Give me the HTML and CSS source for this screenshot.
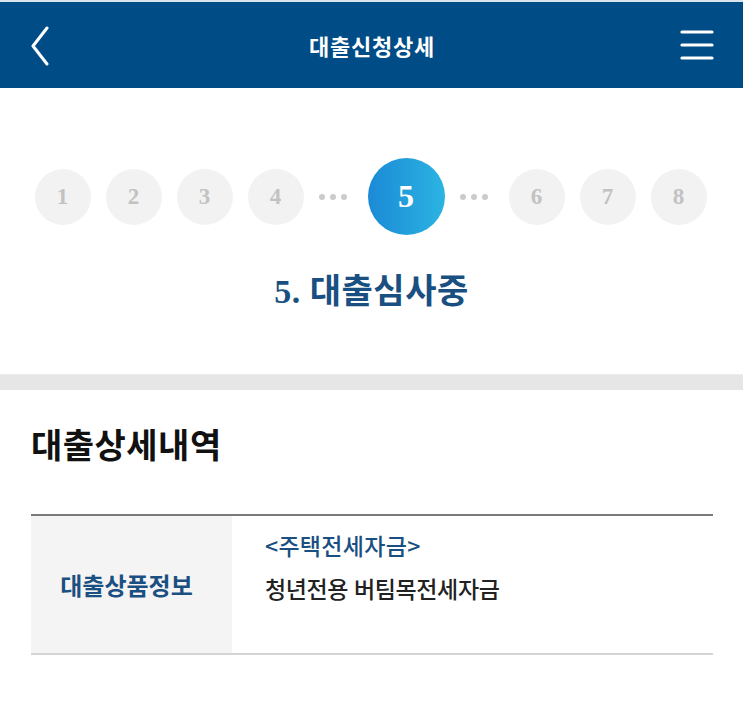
FILE: index.html
```html
<!DOCTYPE html>
<html lang="ko">
<head>
<meta charset="utf-8">
<link rel="stylesheet" href="styles.css">
</head>
<body>
<header class="topbar">
  <button class="icon-btn back" aria-label="뒤로">
    <svg width="20" height="40" viewBox="0 0 20 40"><path d="M17 2 L3 20 L17 38" fill="none" stroke="#fff" stroke-width="3" stroke-linecap="round" stroke-linejoin="round"/></svg>
  </button>
  <h1 class="topbar-title">대출신청상세</h1>
  <button class="icon-btn menu" aria-label="메뉴">
    <svg width="34" height="32" viewBox="0 0 34 32"><g stroke="#fff" stroke-width="3.2" stroke-linecap="round"><line x1="2" y1="3" x2="32" y2="3"/><line x1="2" y1="16" x2="32" y2="16"/><line x1="2" y1="29" x2="32" y2="29"/></g></svg>
  </button>
</header>

<section class="progress">
  <ol class="steps">
    <li class="step">1</li>
    <li class="step">2</li>
    <li class="step">3</li>
    <li class="step">4</li>
    <li class="ellipsis"><span></span><span></span><span></span></li>
    <li class="step current">5</li>
    <li class="ellipsis"><span></span><span></span><span></span></li>
    <li class="step">6</li>
    <li class="step">7</li>
    <li class="step">8</li>
  </ol>
  <h2 class="step-title">5. 대출심사중</h2>
</section>

<div class="divider"></div>

<section class="detail">
  <h3 class="detail-title">대출상세내역</h3>
  <div class="info-table">
    <div class="info-label">대출상품정보</div>
    <div class="info-value">
      <p class="category">&lt;주택전세자금&gt;</p>
      <p class="product">청년전용 버팀목전세자금</p>
    </div>
  </div>
</section>
</body>
</html>
```

FILE: styles.css
```css
* { box-sizing: border-box; }
html, body { margin: 0; padding: 0; background: #fff; }
body {
  font-family: "Noto Sans CJK KR", "Noto Sans", sans-serif;
  color: #111;
}

.topbar {
  height: 88px;
  border-top: 2px solid #dbe3ec;
  background: #004c86;
  display: grid;
  grid-template-columns: 1fr auto 1fr;
  align-items: center;
  padding: 0 29px 0 30px;
}
.icon-btn {
  background: none;
  border: 0;
  padding: 0;
  display: flex;
  align-items: center;
  cursor: pointer;
}
.back { margin-top: 2px; justify-self: start; }
.menu { justify-self: end; }
.topbar-title {
  margin: 0;
  color: #fff;
  font-size: 22px;
  font-weight: 700;
  letter-spacing: 0.8px;
}

.progress {
  padding-top: 70px;
  height: 286px;
}
.steps {
  list-style: none;
  margin: 0;
  padding: 0 2px 0 0;
  display: flex;
  justify-content: center;
  align-items: center;
  gap: 15px;
}
.step {
  width: 56px;
  height: 56px;
  border-radius: 50%;
  background: #f2f2f2;
  color: #c2c2c2;
  font-family: "Liberation Serif", "DejaVu Serif", serif;
  font-weight: 700;
  font-size: 23px;
  display: flex;
  align-items: center;
  justify-content: center;
}
.step.current {
  width: 77px;
  height: 77px;
  background: linear-gradient(90deg, #1b8ad6 0%, #2bb4e2 100%);
  color: #fff;
  font-size: 32px;
}
.ellipsis {
  width: 34px;
  display: flex;
  gap: 5px;
}
.ellipsis span {
  width: 6px;
  height: 6px;
  border-radius: 50%;
  background: #cbcbcb;
}
.step-title {
  margin: 37px 0 0;
  text-align: center;
  color: #1a4f82;
  font-family: "Liberation Serif", "Noto Sans CJK KR", serif;
  font-size: 34px;
  font-weight: 700;
  line-height: 40px;
  letter-spacing: 0.5px;
}

.divider {
  height: 16px;
  background: #e6e6e6;
  border-top: 1px solid #ececec;
}

.detail {
  padding: 0 30px 0 31px;
}
.detail-title {
  margin: 30px 0 0;
  font-size: 34px;
  font-weight: 700;
  line-height: 48px;
  color: #111;
  letter-spacing: 0.5px;
}
.info-table {
  margin-top: 46px;
  display: grid;
  grid-template-columns: 201px 1fr;
  border-top: 2px solid #7a7a7a;
  border-bottom: 2px solid #d4d4d4;
  min-height: 141px;
}
.info-label {
  background: #f4f4f4;
  display: flex;
  align-items: center;
  justify-content: center;
  padding-right: 10px;
  color: #1a4f82;
  font-size: 24px;
  font-weight: 700;
  letter-spacing: 0;
}
.info-value {
  padding: 12px 0 0 33px;
}
.info-value p { margin: 0; }
.category {
  color: #1a4f82;
  font-size: 23px;
  font-weight: 500;
  line-height: 34px;
  letter-spacing: 0.3px;
}
.product {
  margin-top: 9px !important;
  color: #222;
  font-size: 23px;
  font-weight: 500;
  line-height: 34px;
  letter-spacing: -0.4px;
}
```
